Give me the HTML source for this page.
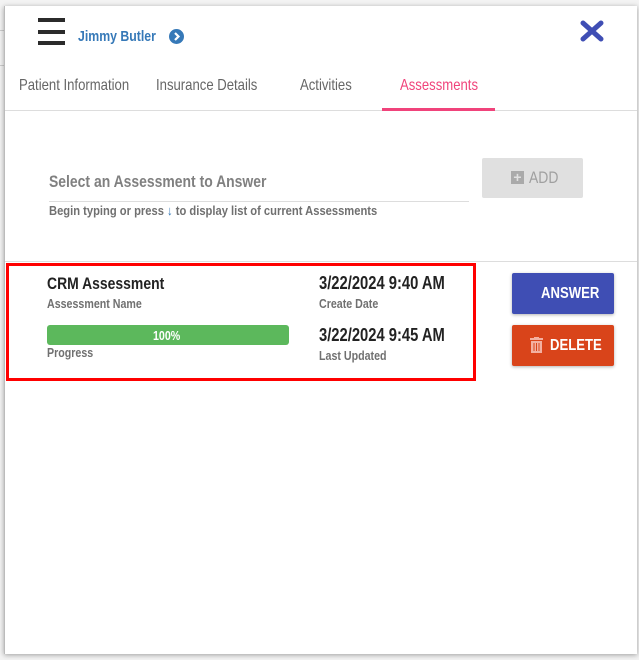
<!DOCTYPE html>
<html><head><style>
html,body{margin:0;padding:0;width:639px;height:660px;overflow:hidden;background:#f3f3f3;}
body{font-family:"Liberation Sans",sans-serif;position:relative;}
.panel{position:absolute;left:4px;top:6px;width:632px;height:648px;background:#fff;box-shadow:0 1px 5px rgba(0,0,0,.35);border-left:1px solid #bbb;}
.a{position:absolute;white-space:nowrap;}
.n{transform:scaleX(.82);transform-origin:0 0;}
.bar{position:absolute;left:33px;width:27px;height:4px;background:#2b2b2b;}
.tab{position:absolute;top:71px;font-size:16px;color:#666;}
</style></head><body>
<div class="a" style="left:0;top:30px;width:4px;height:1px;background:#ccc"></div>
<div class="a" style="left:0;top:65px;width:4px;height:1px;background:#ccc"></div>
<div class="panel">
<div class="bar" style="top:12px"></div>
<div class="bar" style="top:24px"></div>
<div class="bar" style="top:35px"></div>
<div class="a n" style="left:73px;top:22px;font-size:15px;font-weight:bold;color:#3679b8">Jimmy Butler</div>
<svg class="a" style="left:164px;top:23px" width="15" height="15"><circle cx="7.5" cy="7.5" r="7.5" fill="#3679b8"/><path d="M6 4l3.5 3.5L6 11" stroke="#fff" stroke-width="2.2" fill="none"/></svg>
<svg class="a" style="left:575px;top:14px" width="24" height="22"><path d="M3 3L21 19M21 3L3 19" stroke="#3f4eb4" stroke-width="5" stroke-linecap="round"/></svg>
<div class="tab n" style="left:14px">Patient Information</div>
<div class="tab n" style="left:151px">Insurance Details</div>
<div class="tab n" style="left:295px">Activities</div>
<div class="tab n" style="left:395px;color:#f0437b">Assessments</div>
<div class="a" style="left:0;top:104px;width:632px;height:1px;background:#ddd"></div>
<div class="a" style="left:377px;top:102px;width:113px;height:3px;background:#f0437b"></div>
<div class="a n" style="left:44px;top:166px;font-size:17px;font-weight:bold;color:#808080">Select an Assessment to Answer</div>
<div class="a" style="left:44px;top:195px;width:420px;height:1px;background:#ddd"></div>
<div class="a" style="left:44px;top:197px;font-size:13px;font-weight:bold;color:#707070;transform:scaleX(.86);transform-origin:0 0">Begin typing or press <span style="color:#3679b8">↓</span> to display list of current Assessments</div>
<div class="a" style="left:477px;top:152px;width:101px;height:40px;background:#e0e0e0;border-radius:2px"></div>
<div class="a" style="left:506px;top:165px;width:13px;height:13px;background:#aaa;color:#e0e0e0;font-size:14px;line-height:13px;text-align:center;font-weight:bold">+</div>
<div class="a n" style="left:524px;top:162px;font-size:17px;color:#a0a0a0">ADD</div>
<div class="a" style="left:0;top:255px;width:632px;height:1px;background:#ddd"></div>
<div class="a" style="left:1px;top:257px;width:464px;height:112px;border:3px solid #f00;"></div>
<div class="a n" style="left:42px;top:268px;font-size:17px;font-weight:bold;color:#222">CRM Assessment</div>
<div class="a n" style="left:42px;top:290px;font-size:13px;font-weight:bold;color:#707070">Assessment Name</div>
<div class="a" style="left:42px;top:319px;width:242px;height:20px;background:#5cb85c;border-radius:3px"></div>
<div class="a n" style="left:148px;top:322px;font-size:13px;font-weight:bold;color:#fff">100%</div>
<div class="a n" style="left:42px;top:339px;font-size:13px;font-weight:bold;color:#707070">Progress</div>
<div class="a n" style="left:314px;top:267px;font-size:18px;font-weight:bold;color:#222">3/22/2024 9:40 AM</div>
<div class="a n" style="left:314px;top:290px;font-size:13px;font-weight:bold;color:#707070">Create Date</div>
<div class="a n" style="left:314px;top:319px;font-size:18px;font-weight:bold;color:#222">3/22/2024 9:45 AM</div>
<div class="a n" style="left:314px;top:342px;font-size:13px;font-weight:bold;color:#707070">Last Updated</div>
<div class="a" style="left:507px;top:267px;width:102px;height:41px;background:#3f4eb4;border-radius:2px;box-shadow:0 1px 3px rgba(0,0,0,.3)"></div>
<div class="a n" style="left:536px;top:279px;font-size:16px;font-weight:bold;color:#fff">ANSWER</div>
<div class="a" style="left:507px;top:319px;width:102px;height:41px;background:#d9441a;border-radius:2px;box-shadow:0 1px 3px rgba(0,0,0,.3)"></div>
<svg class="a" style="left:525px;top:331px" width="13" height="16"><rect x="0" y="1" width="13" height="2" fill="#f3b0a0"/><rect x="4" y="0" width="5" height="2" fill="#f3b0a0"/><rect x="1" y="4" width="11" height="12" fill="#f3b0a0"/><path d="M4 6v8M6.5 6v8M9 6v8" stroke="#d9441a" stroke-width="1"/></svg>
<div class="a n" style="left:545px;top:331px;font-size:16px;font-weight:bold;color:#fff">DELETE</div>
</div>
</body></html>
